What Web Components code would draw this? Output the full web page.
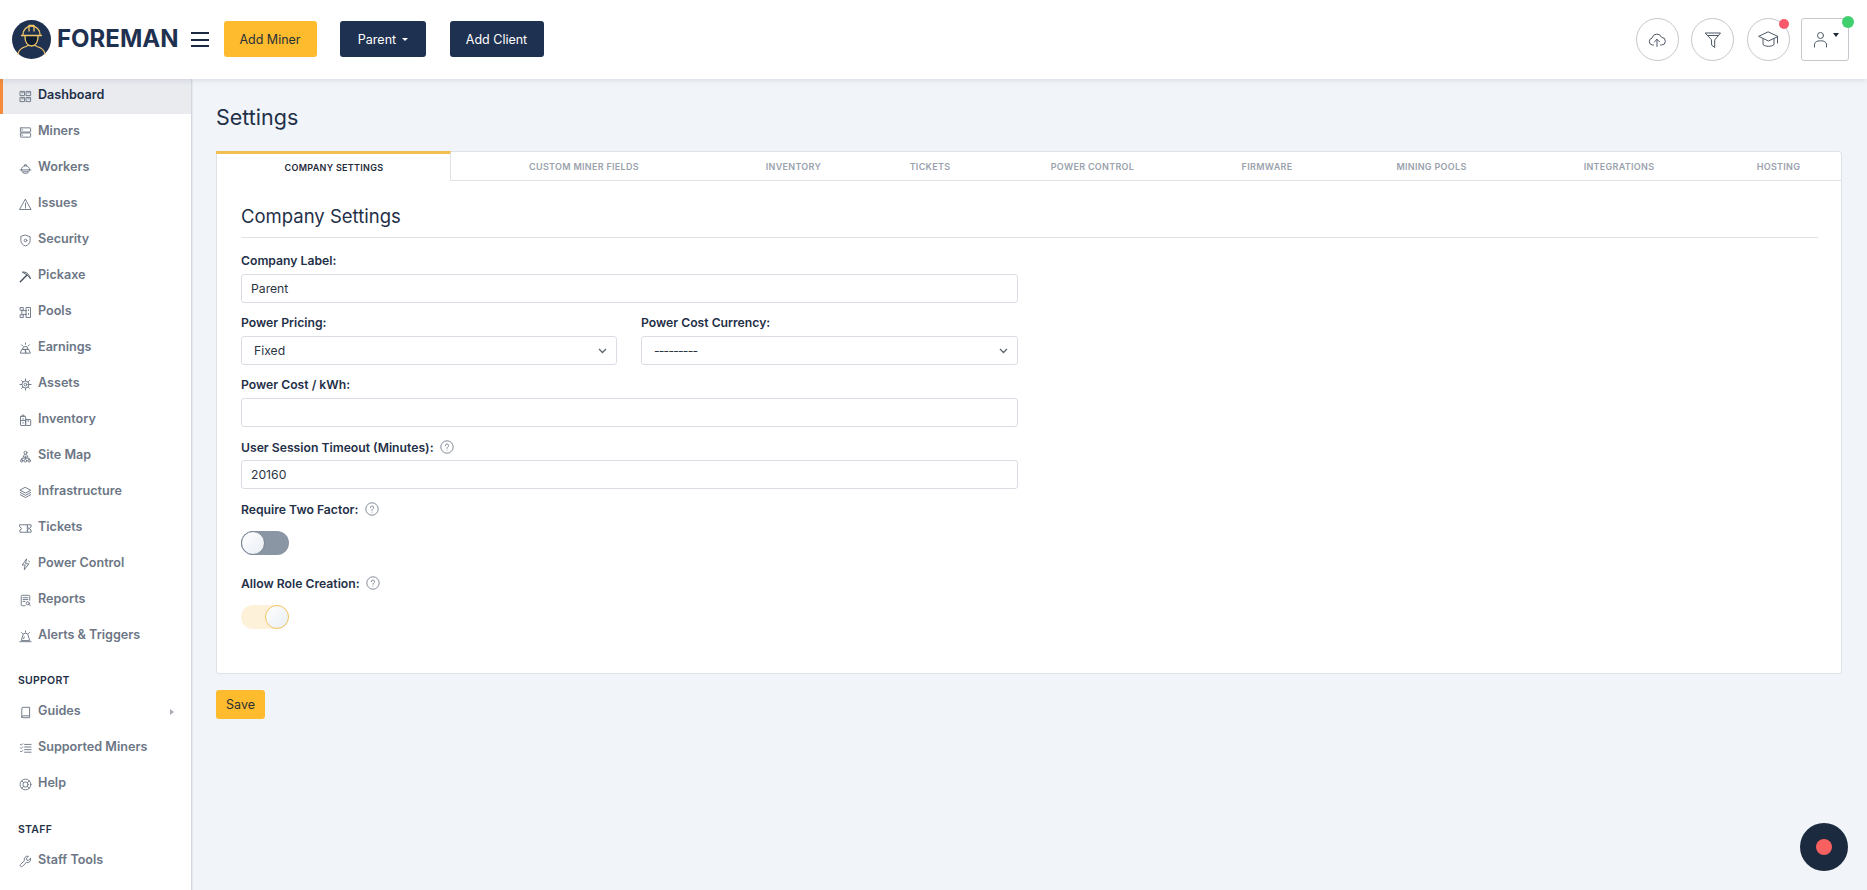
<!DOCTYPE html>
<html lang="en"><head><meta charset="utf-8"><title>Settings</title>
<style>
html,body{margin:0;height:100%;background:#f1f5fa;overflow:hidden}
body{font-family:Inter,"Noto Sans",sans-serif;color:#1f3048}
</style></head><body>
<fm-app>
  <fm-header slot="header">
    <fm-button kind="yellow" w="93">Add Miner</fm-button>
    <fm-button kind="navy" w="86" caret>Parent</fm-button>
    <fm-button kind="navy" w="94">Add Client</fm-button>
  </fm-header>
  <fm-sidebar slot="side">
    <fm-nav icon="dashboard" active>Dashboard</fm-nav>
    <fm-nav icon="miners">Miners</fm-nav>
    <fm-nav icon="workers">Workers</fm-nav>
    <fm-nav icon="issues">Issues</fm-nav>
    <fm-nav icon="security">Security</fm-nav>
    <fm-nav icon="pickaxe">Pickaxe</fm-nav>
    <fm-nav icon="pools">Pools</fm-nav>
    <fm-nav icon="earnings">Earnings</fm-nav>
    <fm-nav icon="assets">Assets</fm-nav>
    <fm-nav icon="inventory">Inventory</fm-nav>
    <fm-nav icon="sitemap">Site Map</fm-nav>
    <fm-nav icon="infra">Infrastructure</fm-nav>
    <fm-nav icon="tickets">Tickets</fm-nav>
    <fm-nav icon="power">Power Control</fm-nav>
    <fm-nav icon="reports">Reports</fm-nav>
    <fm-nav icon="alerts">Alerts &amp; Triggers</fm-nav>
    <fm-nav-title>SUPPORT</fm-nav-title>
    <fm-nav icon="guides" arrow>Guides</fm-nav>
    <fm-nav icon="supported">Supported Miners</fm-nav>
    <fm-nav icon="help">Help</fm-nav>
    <fm-nav-title staff>STAFF</fm-nav-title>
    <fm-nav icon="tools">Staff Tools</fm-nav>
  </fm-sidebar>
  <fm-settings>
    <fm-tabs></fm-tabs>
    <fm-section-title>Company Settings</fm-section-title>
    <fm-field label="Company Label:"><fm-input>Parent</fm-input></fm-field>
    <fm-field-row>
      <fm-field label="Power Pricing:"><fm-input select>Fixed</fm-input></fm-field>
      <fm-field label="Power Cost Currency:"><fm-input select><span style="letter-spacing:-.8px">---------</span></fm-input></fm-field>
    </fm-field-row>
    <fm-field label="Power Cost / kWh:"><fm-input></fm-input></fm-field>
    <fm-field label="User Session Timeout (Minutes):" help><fm-input>20160</fm-input></fm-field>
    <fm-field label="Require Two Factor:" help toggle><fm-toggle></fm-toggle></fm-field>
    <fm-field label="Allow Role Creation:" help toggle><fm-toggle on></fm-toggle></fm-field>
  </fm-settings>
  <fm-chat></fm-chat>
</fm-app>
<script>
const def=(name,css,html,init)=>{customElements.define(name,class extends HTMLElement{
  constructor(){super();this.attachShadow({mode:'open'}).innerHTML='<style>'+css+'</style>'+html;}
  connectedCallback(){init&&init.call(this,this.shadowRoot);}
});};
const ICONS={
dashboard:'<rect x="1.5" y="1.5" width="4.5" height="4.5"/><rect x="8" y="1.5" width="4.5" height="4.5"/><rect x="1.5" y="8" width="4.5" height="4.5"/><rect x="8" y="8" width="4.5" height="4.5"/><path d="M3 3h1.5M9.5 3H11M3 9.5h1.5M9.5 9.5H11"/>',
miners:'<rect x="1.5" y="2" width="11" height="4.5" rx=".6"/><rect x="1.5" y="7.5" width="11" height="4.5" rx=".6"/><path d="M3 4.2h1M3 9.8h1"/>',
workers:'<path d="M2.5 8.5a4.5 4.5 0 0 1 9 0"/><path d="M6 4.2V3h2v1.2"/><path d="M1.2 8.5h11.6"/><path d="M3 8.5c0 3 2 3.8 4 3.8s4-.8 4-3.8"/><path d="M4.5 10.5h5"/>',
issues:'<path d="M7 1.6 13 12.4H1Z"/><path d="M7 5.5v3.6M7 10.2v.6"/>',
security:'<path d="M7 1.2 12 3v4c0 3-2.2 5-5 5.9C4.2 12 2 10 2 7V3Z"/><circle cx="7" cy="7" r="1.4"/>',
pickaxe:'<path d="M1.4 12.6 8.6 5.4" stroke="#454f5c" stroke-width="1.5"/><path d="M4 2.200c3.600-.4 6.800 1.600 8.400 7.400-1.600-2.400-3.400-4.400-5.600-5.400Z" stroke="#454f5c"/>',
pools:'<rect x="1.6" y="1.6" width="3" height="3"/><rect x="1.6" y="9.4" width="3" height="3"/><rect x="8" y="1.6" width="4.4" height="10.8"/><path d="M3.1 4.6v4.8M8 5H4.6M8 9H4.6M10.2 4v1M10.2 8v1"/>',
earnings:'<path d="M7 1v1.4M2.8 3l1 1M11.2 3l-1 1"/><path d="M5.2 5h3.6l1 3H4.2Z"/><path d="M3.4 8h3.5l.6 4H1.8ZM7 8h3.6l1.6 4H7.6Z"/>',
assets:'<circle cx="7" cy="7" r="3.8"/><circle cx="7" cy="7" r="1.5"/><path d="M7 1v2M7 11v2M1 7h2M11 7h2M2.8 2.8l1.4 1.4M9.8 9.8l1.4 1.4M11.2 2.8 9.8 4.2M4.2 9.8l-1.4 1.4"/>',
inventory:'<rect x="1.6" y="2.6" width="5.6" height="9.8" rx=".5"/><rect x="7.2" y="6" width="5.4" height="6.4" rx=".5"/><path d="M3.4 2.600V1.200h2v1.400M1.600 7h5.600M9.900 6v2.200M4.400 5v.8M4.400 9v.8"/>',
sitemap:'<circle cx="7" cy="3" r="1.6"/><path d="M4.6 7.200c0-1.400 1-2.200 2.400-2.200s2.400.8 2.400 2.200ZM7 7.200v1.600M3 11V8.800h8V11"/><circle cx="3" cy="11.600" r="1.400"/><circle cx="7" cy="11.600" r="1.400"/><circle cx="11" cy="11.600" r="1.400"/>',
infra:'<path d="M7 1.600 12.600 4.600 7 7.600 1.400 4.600Z"/><path d="M1.400 7 7 10l5.600-3M1.400 9.400 7 12.400l5.600-3"/>',
tickets:'<path d="M1 3h12v2.400L11 7l2 1.600V11H1V8.600L3 7 1 5.400Z"/><path d="M9 3v8M9 5l1.400 2L9 9"/>',
power:'<path d="M8 1.200 3.400 7.600h3.200l-1 5.200 5-6.600H7.400Z"/><path d="M10.400 3.200l1 .8"/>',
reports:'<path d="M11.600 6.800V2.400a1 1 0 0 0-1-1H3.400a1 1 0 0 0-1 1v9.200a1 1 0 0 0 1 1h3.200"/><path d="M4.400 4h5.200M4.400 6h5.200M4.400 8h2"/><circle cx="9.400" cy="10" r="1.700"/><path d="m10.600 11.200 1.500 1.500"/>',
alerts:'<path d="M2.600 11 4 6.400a3 3 0 0 1 6 0l1.400 4.600Z"/><path d="M1 12.600h12M7 1v1.400M2.800 2.800l1 1M11.200 2.800l-1 1"/><path d="M5.600 7.400 5 9.400"/>',
guides:'<path d="M3 2.800A1.400 1.400 0 0 1 4.400 1.400h7v9.200H4.400A1.400 1.400 0 0 0 3 12Z"/><path d="M3 11.400c0 .8.6 1.200 1.400 1.200h7v-2"/>',
supported:'<path d="M6 2.600h7M6 5.400h7M6 8.200h7M6 11h7"/><path d="m1.600 2.600.8.8L4 1.800M1.600 6.200l.8.8L4 5.400M1.600 10l.8.8L4 9.200"/>',
help:'<circle cx="7" cy="7" r="5.800"/><circle cx="7" cy="7" r="2.800"/><path d="m3 3 2 2M11 3 9 5M3 11l2-2M11 11 9 9"/>',
tools:'<path d="M12.400 3.600 10.200 5.800 8.400 5.400 8 3.600l2.200-2.200a3.600 3.600 0 0 0-4.400 4.600L1.600 10.200a1.500 1.500 0 0 0 2.100 2.100L7.900 8.100a3.600 3.600 0 0 0 4.500-4.500Z"/>'
};
const HELP='<svg viewBox="0 0 14 14" width="14" height="14" fill="none" stroke="#77808e" stroke-width=".9"><circle cx="7" cy="7" r="6.200"/><path d="M5.400 5.600A1.600 1.600 0 1 1 7.600 7.100C7.100 7.400 7 7.700 7 8.300" stroke-linecap="round"/><circle cx="7" cy="10" r=".5" fill="#77808e" stroke="none"/></svg>';

def('fm-app',`:host{display:grid;grid-template:79px 1fr/192px 1fr;height:890px;overflow:hidden}
::slotted([slot=header]){grid-column:1/3;z-index:2}
main{min-width:0;padding:0 25px 0 24px}
h1{font:400 21.500px/28px Inter,sans-serif;color:#1f3048;margin:24px 0 20px}
.save{display:flex;align-items:center;justify-content:center;margin-top:16px;width:49px;height:29px;background:#fdbb2d;border-radius:3px;font:400 12.500px Inter,sans-serif;color:#2b2f33}`,
`<slot name="header"></slot><slot name="side"></slot><main><h1>Settings</h1><slot></slot><div class="save">Save</div></main>`);

def('fm-header',`:host{display:flex;align-items:center;height:79px;background:#fff;box-shadow:0 1px 6px rgba(40,60,90,.14);padding:0 18px 0 12px;box-sizing:border-box}
.logo{width:39px;height:39px;flex:none;stroke:none}
.name{font:700 24px/1 Inter,sans-serif;color:#1f3150;margin:-2px 12px 0 6px}
.burger{width:18px;height:15px;flex:none;margin-right:15px;display:flex;flex-direction:column;justify-content:space-between}
.burger i{display:block;height:2px;background:#1a2a42}
.btns{display:flex;gap:23.500px;margin-top:-1px}
.right{margin-left:auto;display:flex;align-items:center;gap:12.500px}
.c{position:relative;width:43px;height:43px;box-sizing:border-box;border:1px solid #c4c7cc;border-radius:50%;display:flex;align-items:center;justify-content:center;flex:none}
.dot{position:absolute;border-radius:50%}
.c .dot{width:10px;height:10px;background:#f9596a;top:0;right:0}
.u{position:relative;width:48px;height:43px;box-sizing:border-box;border:1px solid #c4c7cc;border-radius:3px;display:flex;align-items:center;justify-content:center;gap:2px;flex:none;margin-top:-1px;margin-left:-1px}
.u .dot{width:12px;height:12px;background:#3fcf6c;top:-3px;right:-6px}
.t{width:0;height:0;border:3.500px solid transparent;border-top:4px solid #1f2a3a;border-bottom:0;margin:-9px 0 0 2px}
svg{display:block;fill:none;stroke:#4c5866;stroke-width:1;stroke-linecap:round;stroke-linejoin:round}`,
`<svg class="logo" viewBox="0 0 39 39"><circle cx="19.500" cy="19.500" r="19.500" fill="#1f3150"/>
<path d="M13 16h13c.3 6-2.500 10-6.500 10S12.700 22 13 16Z" fill="#101d31"/>
<g fill="none" stroke="#f0c667" stroke-width="1.300"><path d="M11 14.500a8.500 8.500 0 0 1 17 0"/><path d="M9.500 15.500h20"/><path d="M17 7V5.500h5V7M17 7v4M22 7v4"/><path d="M13 16c-.3 6 2.500 10 6.500 10s6.800-4 6.500-10"/><path d="M6 34c.5-4 3-6 8-7.500l2-1M33 34c-.5-4-3-6-8-7.500l-2-1"/></g></svg>
<span class="name">FOREMAN</span>
<div class="burger"><i></i><i></i><i></i></div>
<div class="btns"><slot></slot></div>
<div class="right">
<div class="c"><svg width="18" height="18" viewBox="0 0 18 18"><path d="M5.500 14H4.500A3.500 3.500 0 0 1 4 7.100 5 5 0 0 1 13.600 6.400 3.800 3.800 0 0 1 13.500 14H12.500"/><path d="M9 15.500V8.500M6.500 10.800 9 8.300l2.500 2.500"/></svg></div>
<div class="c"><svg width="20" height="20" viewBox="0 0 20 20"><path d="M2.500 3h15l-5.800 7v7.500l-3-2.300-.3-5.200Z"/><path d="M4.500 5.500h11"/></svg></div>
<div class="c"><svg width="21" height="19" viewBox="0 0 21 19"><path d="M10.500 2 20 6.500l-9.500 4.500L1 6.500Z"/><path d="M5 9v5.500c2.500 2.400 8.500 2.400 11 0V9M19.500 7v6"/></svg><span class="dot"></span></div>
<div class="u"><svg width="17" height="17" viewBox="0 0 17 17"><circle cx="8.500" cy="4.500" r="3"/><path d="M2.500 16v-2c0-2.800 2-4.200 6-4.200s6 1.400 6 4.200v2"/></svg><span class="t"></span><span class="dot"></span></div>
</div>`);

def('fm-button',`:host{display:inline-flex;align-items:center;justify-content:center;height:36px;border-radius:3px;font:400 12.500px Inter,sans-serif;box-sizing:border-box;gap:6px}
:host([kind=yellow]){background:#fdbb2d;color:#27303a}
:host([kind=navy]){background:#1f3150;color:#fff}
.t{display:none;width:0;height:0;border:3px solid transparent;border-top:3.500px solid #fff;border-bottom:0}
:host([caret]) .t{display:block}`,`<slot></slot><span class="t"></span>`,
function(){this.style.width=this.getAttribute('w')+'px';});

def('fm-sidebar',`:host{display:block;background:#fff;border-right:1px solid #d3d8e0;margin-top:-1px;box-sizing:border-box;overflow:hidden;box-shadow:1px 0 0 #e6e9ef}`,`<slot></slot>`);

def('fm-nav',`:host{display:flex;align-items:center;height:36px;padding:0 0 3px 19px;color:#6c7685;font:600 12.600px Inter,sans-serif;position:relative;box-sizing:border-box}
:host([active]){background:#e9ebef;color:#1f3048;box-shadow:inset 3px 0 0 #f68b3c}
svg{width:13px;height:13px;margin:3px 6px 0 0;flex:none;fill:none;stroke:#6c7685;stroke-width:1;stroke-linejoin:round;stroke-linecap:round}
.a{display:none;position:absolute;right:17px;top:15px;width:0;height:0;border:3px solid transparent;border-left:4px solid #a9afb8;border-right:0}
:host([arrow]) .a{display:block}`,
`<svg viewBox="0 0 14 14"></svg><slot></slot><i class="a"></i>`,
function(s){s.querySelector('svg').innerHTML=ICONS[this.getAttribute('icon')]||'';});

def('fm-nav-title',`:host{display:block;padding:20px 0 6px 18px;font:600 10.500px/14px Inter,sans-serif;letter-spacing:.25px;color:#1f3048}
:host([staff]){padding-top:21px}`,`<slot></slot>`);

def('fm-settings',`:host{display:block;background:#fff;border:1px solid #dfe3e8;border-radius:3px;height:523px;box-sizing:border-box}`,`<slot></slot>`);

const TABS=[['COMPANY SETTINGS',235],['CUSTOM MINER FIELDS',264],['INVENTORY',155],['TICKETS',118],['POWER CONTROL',207],['FIRMWARE',142],['MINING POOLS',189],['INTEGRATIONS',186],['HOSTING',1]];
def('fm-tabs',`:host{display:flex;height:30px;margin-top:-1px;font:600 9px Inter,sans-serif;letter-spacing:.3px;color:#9aa2ad}
.t{display:flex;align-items:center;justify-content:center;flex:none;border-bottom:1px solid #dfe3e8;box-sizing:border-box;padding-top:2px}
.t:nth-child(-n+7){padding-left:2px}
.t:last-child{flex:1;padding-left:4px}
.a{color:#1f2a3a;border-top:3px solid #f2c052;border-bottom:0;border-right:1px solid #dfe3e8;margin-left:-1px;padding-top:0}`,'',
function(s){if(s.querySelector('.t'))return;s.innerHTML+=TABS.map((t,i)=>`<div class="t${i?'':' a'}" style="${t[1]>1?'width:'+t[1]+'px':''}">${t[0]}</div>`).join('');});

def('fm-section-title',`:host{display:block;margin:0 23px 3px 24px;height:57px;padding-top:21px;box-sizing:border-box;font:400 18.500px/28px Inter,sans-serif;color:#1f3048;border-bottom:1px solid #dfe3e8}`,`<slot></slot>`);

def('fm-field',`:host{display:block;margin:0 0 0 24px;width:777px}
.l{display:flex;align-items:center;gap:6.500px;height:16px;margin-bottom:6px;font:600 12.200px Inter,sans-serif;color:#1f3048;padding-top:11px}
:host([help]) .l{padding-top:12px;margin-bottom:5px}
:host([toggle]) .l{margin-bottom:14px;padding-top:12px}
.h{display:none;margin-top:2px}:host([help]) .h{display:block}
:host([toggle]){margin-bottom:8px}`,
`<div class="l"><span id="t"></span><span class="h">${HELP}</span></div><slot></slot>`,
function(s){s.getElementById('t').textContent=this.getAttribute('label');});

def('fm-field-row',`:host{display:grid;grid-template-columns:376px 377px;column-gap:24px;margin-left:24px;width:777px}
::slotted(*){margin:0!important;width:auto!important}`,`<slot></slot>`);

def('fm-input',`:host{display:flex;align-items:center;justify-content:space-between;height:29px;box-sizing:border-box;background:#fff;border:1px solid #dadee4;border-radius:3px;padding:0 9px;font:400 12.200px Inter,sans-serif;color:#2b3644}
:host([select]){padding:0 9px 0 12px}
svg{display:none;fill:none;stroke:#5c6570;stroke-width:1.300}
:host([select]) svg{display:block}`,
`<slot></slot><svg width="9" height="6" viewBox="0 0 9 6"><path d="m1 1 3.500 3.500L8 1"/></svg>`);

def('fm-toggle',`:host{display:block;width:48px;height:24px;border-radius:12px;background:#8b96a5;position:relative}
:host([on]){background:#fdf2d9}
i{position:absolute;top:0;left:0;width:24px;height:24px;box-sizing:border-box;border-radius:50%;border:1px solid #7c8796;background:linear-gradient(135deg,#fff,#e9eef4)}
:host([on]) i{left:auto;right:0;border-color:#f1c55e}`,`<i></i>`);

def('fm-chat',`:host{position:fixed;right:19px;bottom:19px;width:48px;height:48px;border-radius:50%;background:#1b2a3e;display:flex;align-items:center;justify-content:center;z-index:5}
i{width:16px;height:16px;border-radius:50%;background:#f96060}`,`<i></i>`);
</script>
</body></html>
